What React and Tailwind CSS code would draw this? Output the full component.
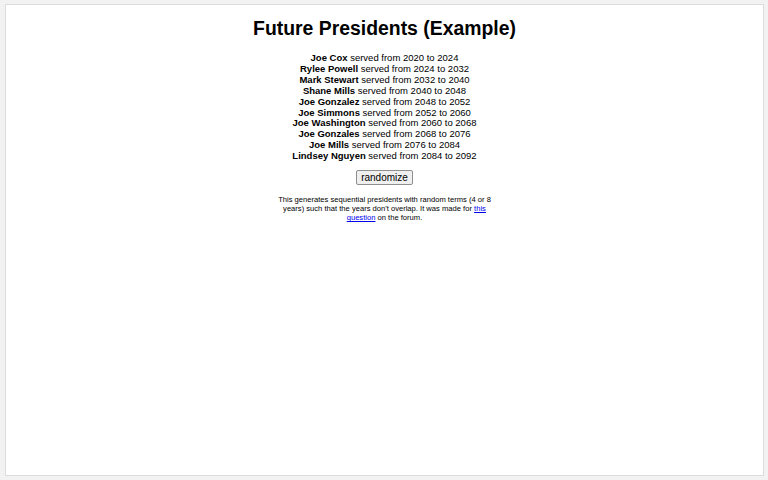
import React from "react";

const presidents = [
  ["Joe Cox", 2020, 2024],
  ["Rylee Powell", 2024, 2032],
  ["Mark Stewart", 2032, 2040],
  ["Shane Mills", 2040, 2048],
  ["Joe Gonzalez", 2048, 2052],
  ["Joe Simmons", 2052, 2060],
  ["Joe Washington", 2060, 2068],
  ["Joe Gonzales", 2068, 2076],
  ["Joe Mills", 2076, 2084],
  ["Lindsey Nguyen", 2084, 2092],
];

export default function App() {
  return (
    <div className="h-[480px] w-[768px] bg-[#f2f2f2] p-[4px_4px_4px_5px] font-['Liberation_Sans',Arial,sans-serif] text-black">
      <div className="flex h-[472px] flex-col items-center border border-[#dcdcdc] bg-white">
        <h1 className="mt-[11px] text-[19.4px] font-bold leading-[24px]">Future Presidents (Example)</h1>

        <ul className="mt-[13px] text-center text-[9.5px] leading-[10.9px]">
          {presidents.map(([name, from, to]) => (
            <li key={name}>
              <b>{name}</b> served from {from} to {to}
            </li>
          ))}
        </ul>

        <button className="mt-[8px] rounded-[2px] border border-[#8f8f8f] bg-[#efefef] px-[4px] text-[10px] leading-[13px]">
          randomize
        </button>

        <p className="mt-[10px] w-[222px] text-center text-[7.6px] leading-[9.2px]">
          This generates sequential presidents with random terms (4 or 8 years) such that the years don't overlap. It was made for{" "}
          <a href="#" className="text-[#0000ee] underline">this</a>{" "}
          <a href="#" className="text-[#0000ee] underline">question</a> on the forum.
        </p>
      </div>
    </div>
  );
}
